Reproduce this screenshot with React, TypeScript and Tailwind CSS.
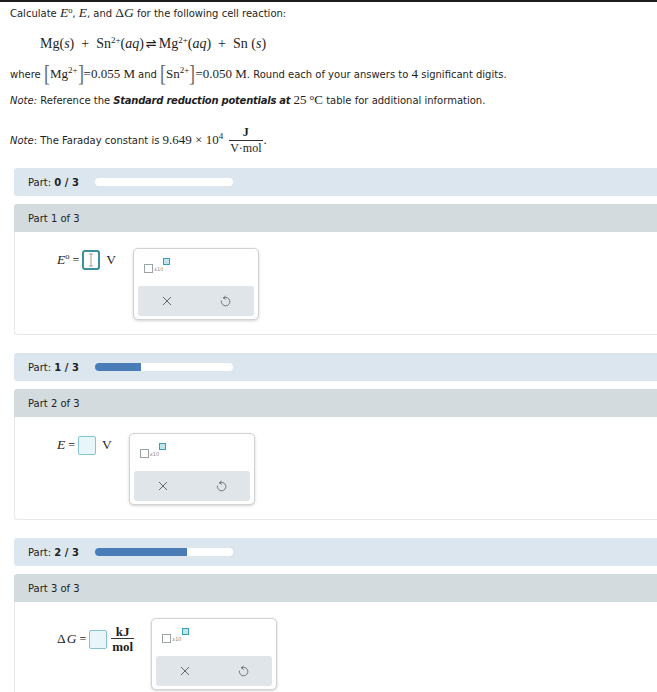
import React from "react";

const serif = { fontFamily: '"Liberation Serif", "DejaVu Serif", serif' };

function X10Icon() {
  return (
    <div className="flex items-end">
      <span className="block w-[9px] h-[9px] border border-[#9aa3a6] bg-white" />
      <span className="text-[5px] leading-none text-[#888] ml-[1px] mb-[1px]">x10</span>
      <span className="block w-[7px] h-[7px] border border-[#3a9fb5] bg-[#bfe6ef] mb-[8px]" />
    </div>
  );
}

function UndoIcon() {
  return (
    <svg width="12" height="13" viewBox="0 0 12 13" fill="none" stroke="#777" strokeWidth="1" strokeLinecap="round">
      <path d="M4.5 2.8 A4.3 4.3 0 1 1 2.3 6" />
      <path d="M4.5 2.8 L6.3 1.2 M4.5 2.8 L6.4 4.3" />
    </svg>
  );
}

function Popup() {
  return (
    <div className="w-[126px] h-[72px] border border-[#cfd3d5] rounded-[5px] bg-white shadow-[0_1px_3px_rgba(0,0,0,0.18)] flex flex-col">
      <div className="h-[37px] pl-[10px] pt-[9px]">
        <X10Icon />
      </div>
      <div className="mx-[4px] h-[30px] bg-[#dfe5e8] rounded-[3px] flex">
        <div className="flex-1 flex items-center justify-center">
          <svg width="10" height="10" viewBox="0 0 10 10" stroke="#666" strokeWidth="1">
            <path d="M1 1 L9 9 M9 1 L1 9" />
          </svg>
        </div>
        <div className="flex-1 flex items-center justify-center">
          <UndoIcon />
        </div>
      </div>
    </div>
  );
}

function AnswerBox({ active }: { active?: boolean }) {
  if (active) {
    return (
      <span className="inline-flex w-[18px] h-[20px] border-2 border-[#3d8fa0] rounded-[3px] items-center justify-center bg-white">
        <svg width="6" height="14" viewBox="0 0 6 14" stroke="#888" strokeWidth="0.8">
          <path d="M1 1 H5 M3 1 V13 M1 13 H5" />
        </svg>
      </span>
    );
  }
  return <span className="inline-block w-[18px] h-[19px] border border-[#86c3d3] rounded-[2px] bg-[#e8f5f9]" />;
}

function PartBlock({
  done,
  fill,
  index,
  eq,
  padTop,
}: {
  done: number;
  fill: number;
  index: number;
  eq: React.ReactNode;
  padTop: string;
}) {
  return (
    <div className="ml-[14px]">
      <div className="h-[28px] bg-[#dbe6ef] rounded-l-[3px] flex items-center pl-[14px] text-[#222]">
        <span className="w-[67px]">
          Part: <b>{done} / 3</b>
        </span>
        <div className="w-[138px] h-[8px] bg-white rounded-full overflow-hidden">
          <div className="h-full bg-[#4a7db8]" style={{ width: `${fill}px` }} />
        </div>
      </div>
      <div className="mt-[8px] h-[28px] bg-[#d3dbde] rounded-tl-[3px] flex items-center pl-[14px] text-[#222]">
        Part {index} of 3
      </div>
      <div className="h-[103px] border-l border-b border-[#e6e8e9] rounded-bl-[3px] flex pl-[42px] pt-[16px] gap-[17px]">
        <div className={padTop}>{eq}</div>
        <Popup />
      </div>
    </div>
  );
}

function Bracket({ side }: { side: "[" | "]" }) {
  return (
    <span className="text-[24px] font-light text-[#666] leading-none -mt-[2px] scale-x-75 -mx-[1px]">{side}</span>
  );
}

export default function App() {
  return (
    <div
      className="w-[657px] h-[692px] overflow-hidden bg-white text-[#1e1e1e] text-[10px]"
      style={{ fontFamily: '"DejaVu Sans", Verdana, sans-serif' }}
    >
      <div className="h-[2px] bg-[#1c1c1c]" />
      <div className="pl-[10px]">
        <div className="h-[22px] flex items-center">
          Calculate&nbsp;
          <span style={serif} className="text-[13.5px] italic">
            E<sup className="text-[8.5px] not-italic">o</sup>
          </span>
          ,&nbsp;
          <span style={serif} className="text-[13.5px] italic">E</span>, and&nbsp;
          <span style={serif} className="text-[13.5px]">
            Δ<i>G</i>
          </span>
          &nbsp;for the following cell reaction:
        </div>
        <div className="h-[38px] flex items-center pl-[30px] text-[14px]" style={serif}>
          <span>
            Mg(<i>s</i>)&nbsp; +&nbsp; Sn<sup className="text-[9px]">2+</sup>(<i>aq</i>)
            <span className="mx-[2px] text-[13px]" style={{ fontFamily: '"DejaVu Sans", sans-serif' }}>⇌</span>
            Mg<sup className="text-[9px]">2+</sup>(<i>aq</i>)&nbsp; +&nbsp; Sn&nbsp;(<i>s</i>)
          </span>
        </div>
        <div className="h-[24px] flex items-center">
          where&nbsp;
          <span style={serif} className="text-[13px] flex items-center">
            <Bracket side="[" />
            Mg<sup className="text-[9px]">2+</sup>
            <Bracket side="]" />
            =0.055 M
          </span>
          &nbsp;and&nbsp;
          <span style={serif} className="text-[13px] flex items-center">
            <Bracket side="[" />
            Sn<sup className="text-[9px]">2+</sup>
            <Bracket side="]" />
            =0.050 M
          </span>
          . Round each of your answers to&nbsp;
          <span style={serif} className="text-[13px]">4</span>&nbsp;significant digits.
        </div>
        <div className="h-[28px] flex items-center">
          <i>Note:</i>&nbsp;Reference the&nbsp;
          <b className="italic tracking-[-0.25px]">Standard reduction potentials at</b>&nbsp;
          <span style={serif} className="text-[13px]">25&thinsp;°C</span>&nbsp;table for additional information.
        </div>
        <div className="h-[52px] flex items-center">
          <i>Note</i>: The Faraday constant is&nbsp;
          <span style={serif} className="text-[13px] flex items-center">
            9.649 × 10<sup className="text-[9px]">4</sup>
            <span className="inline-flex flex-col items-center ml-[6px] mr-[1px] text-[12px] leading-[12px]">
              <span className="font-bold">J</span>
              <span className="border-t border-[#333] px-[1px] mt-[2px] pt-[1px]">V·mol</span>
            </span>
            .
          </span>
        </div>
      </div>

      <div className="mt-[2px] flex flex-col gap-[18px]">
        <PartBlock
          done={0}
          fill={0}
          index={1}
          padTop="pt-[2px]"
          eq={
            <div className="flex items-center text-[13.5px]" style={serif}>
              <span className="italic">E</span>
              <sup className="text-[8.5px]">o</sup>
              <span className="text-[12px] mx-[3px]">=</span>
              <AnswerBox active />
              <span className="ml-[6px]">V</span>
            </div>
          }
        />
        <PartBlock
          done={1}
          fill={46}
          index={2}
          padTop="pt-[2px]"
          eq={
            <div className="flex items-center text-[13.5px]" style={serif}>
              <span className="italic">E</span>
              <span className="text-[12px] mx-[3px]">=</span>
              <AnswerBox />
              <span className="ml-[6px]">V</span>
            </div>
          }
        />
        <PartBlock
          done={2}
          fill={92}
          index={3}
          padTop="pt-[6px]"
          eq={
            <div className="flex items-center text-[13.5px]" style={serif}>
              <span>Δ</span>
              <span className="italic ml-[1px]">G</span>
              <span className="text-[12px] mx-[3px]">=</span>
              <AnswerBox />
              <span className="inline-flex flex-col items-center ml-[4px] text-[13px] leading-[15px]">
                <span className="font-bold -mb-[1px]">kJ</span>
                <span className="border-t border-[#333] px-[1px] font-bold">mol</span>
              </span>
            </div>
          }
        />
      </div>
    </div>
  );
}
